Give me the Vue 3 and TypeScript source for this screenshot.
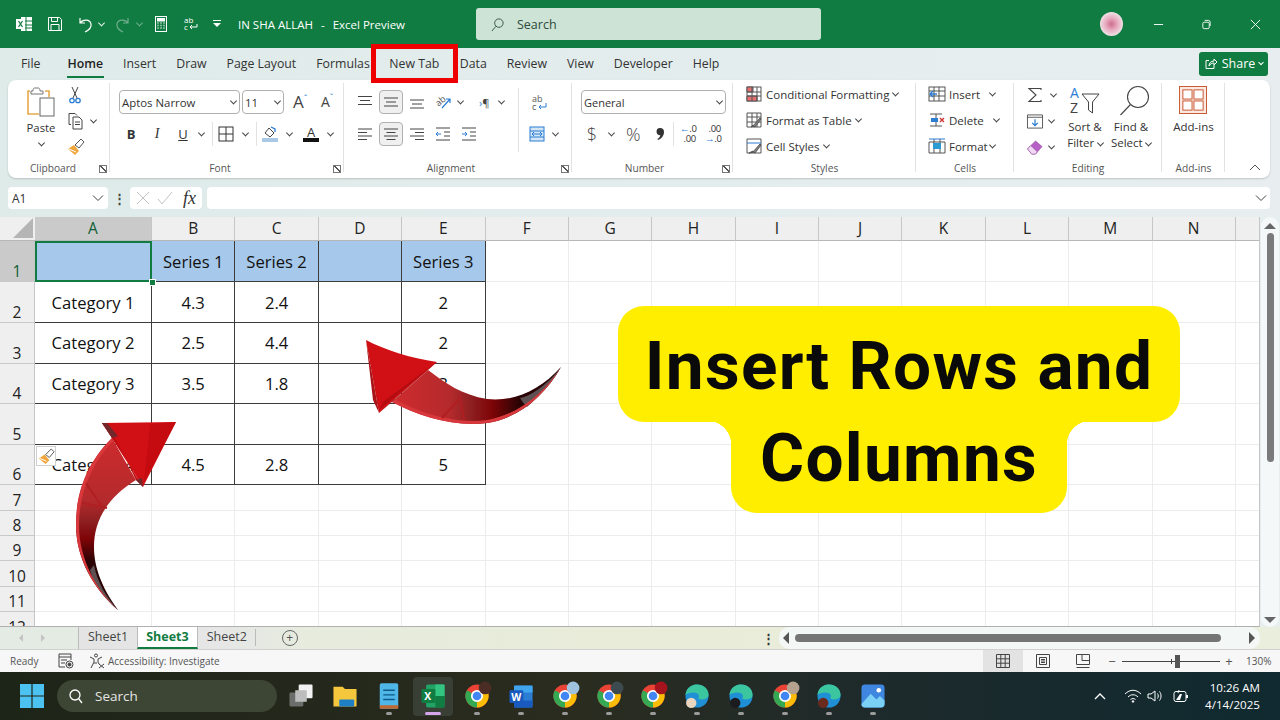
<template>
  <div class="app">
    <header class="titlebar">
      <div class="qat">
        <svg class="ic xl" viewBox="0 0 18 18"><rect x="6" y="2" width="11" height="14" fill="#fff"/><path d="M6 6h11M6 10h11M6 13h11M11 2v14" stroke="#107c41"/><rect x="1" y="4" width="9" height="10" fill="#fff"/><path d="M3.500 6l4 6M7.500 6l-4 6" stroke="#107c41" stroke-width="1.300"/></svg>
        <svg class="ic save" viewBox="0 0 18 18" fill="none" stroke="#fff"><path d="M2.500 2.500h11l2 2v11h-13z"/><path d="M5.500 2.500v4h6v-4M5 15.500v-6h8v6"/></svg>
        <svg class="ic undo" viewBox="0 0 18 18" fill="none" stroke="#fff" stroke-width="1.200"><path d="M3 3v5h5M3 8c3-4 10-4 11 1 .6 3-2 6-6 8"/></svg>
        <span class="caret light"></span>
        <svg class="ic redo" viewBox="0 0 18 18" fill="none" stroke="#6fae8d" stroke-width="1.200"><path d="M15 3v5h-5M15 8c-3-4-10-4-11 1-.6 3 2 6 6 8"/></svg>
        <span class="caret dim"></span>
        <svg class="ic calc" viewBox="0 0 18 18" fill="none" stroke="#fff"><rect x="3.500" y="1.500" width="11" height="15"/><rect x="5.500" y="3.500" width="7" height="2.500" fill="#fff"/><path d="M5.500 8h1m2 0h1m2 0h1M5.500 10.500h1m2 0h1m2 0h1M5.500 13h1m2 0h1m2 0h1" stroke-width="1.400"/></svg>
        <svg class="ic abc" viewBox="0 0 18 18" fill="none" stroke="#fff"><path d="M15 9v3H8m2-2l-2 2 2 2"/><text x="2" y="8" class="abc-t">ab</text><text x="2" y="15" class="abc-t">c</text></svg>
        <svg class="ic more" viewBox="0 0 10 10" fill="#fff"><rect x="1" y="1" width="8" height="1"/><path d="M1 4h8l-4 4z"/></svg>
      </div>
      <div class="doc-title"><span>IN SHA ALLAH</span><span>-</span><span>Excel Preview</span></div>
      <div class="search-box">
        <svg viewBox="0 0 16 16" fill="none" stroke="#33533f"><circle cx="9.500" cy="6.500" r="4.500"/><path d="M6.200 10L2 15"/></svg>
        <span>Search</span>
      </div>
      <div class="win-ctl">
        <div class="avatar"></div>
        <svg viewBox="0 0 12 12" stroke="#fff" class="ctl"><path d="M1 6h10"/></svg>
        <svg viewBox="0 0 12 12" stroke="#fff" fill="none" class="ctl"><rect x="2" y="3.500" width="7" height="7" rx="1.500"/><path d="M4 1.500h4a2 2 0 0 1 2 2v4"/></svg>
        <svg viewBox="0 0 12 12" stroke="#fff" class="ctl"><path d="M1 1l10 10M11 1L1 11"/></svg>
      </div>
    </header>

    <div class="chrome">
      <nav class="tabs">
        <span v-for="t in tabs" :key="t.name" class="tab" :class="{ active: t.active, marked: t.marked }">{{ t.name }}</span>
        <button class="share">
          <svg viewBox="0 0 14 14" fill="none" stroke="#fff"><path d="M10 7.500v4H2v-8h3M5 9c0-3 2-5 5-5V2l3 3-3 3V6C8 6 6 7 5 9z"/></svg>
          Share <span class="caret white"></span>
        </button>
      </nav>

      <section class="ribbon">
        <div class="grp clipboard">
          <div class="grp-body clip-body">
            <div class="paste">
              <svg viewBox="0 0 32 32" width="32" height="32" fill="none"><path d="M5 5H3v23h11M20 5h4v6" stroke="#e8a94c" stroke-width="1.600"/><path d="M8 5c0-3 1-3 2-3h3c1 0 2 0 2 3h3v3H6V5z" stroke="#777" fill="#fff"/><rect x="15" y="12" width="14" height="18" fill="#fff" stroke="#666"/></svg>
              <span class="lbl">Paste</span>
              <span class="caret"></span>
            </div>
            <div class="clip-col">
              <svg class="scissors" viewBox="0 0 14 18" width="14" height="18" fill="none"><path d="M4 1l5 11M10 1L5 12" stroke="#444"/><circle cx="4" cy="14.500" r="2.200" stroke="#2b7cd3" stroke-width="1.300"/><circle cx="10" cy="14.500" r="2.200" stroke="#2b7cd3" stroke-width="1.300"/></svg>
              <div class="with-caret">
                <svg viewBox="0 0 18 18" width="18" height="18" fill="none" stroke="#444"><path d="M4 12.500H2V1.500h6l2 2"/><path d="M6 5h6l3 3v9H6z"/><path d="M8 10h5M8 12.500h5"/></svg>
                <span class="caret"></span>
              </div>
              <svg viewBox="0 0 18 18" width="18" height="18"><path d="M1 11l6-4 5 6-4 4z" fill="#f0a63a"/><path d="M2 11l7 3" stroke="#fff"/><path d="M8 7l6-6 3 3-5 6z" fill="#fff" stroke="#555"/></svg>
            </div>
          </div>
          <div class="grp-name">Clipboard<i class="launch"></i></div>
        </div>

        <div class="grp font">
          <div class="grp-body stack">
            <div class="row font-row1">
              <div class="combo font-name">Aptos Narrow<span class="caret"></span></div>
              <div class="combo font-size">11<span class="caret"></span></div>
              <span class="big-a">A<sup>ˆ</sup></span>
              <span class="small-a">A<sup>ˇ</sup></span>
            </div>
            <div class="row font-row2">
              <b class="fb">B</b><i class="fi">I</i><u class="fu">U</u><span class="caret"></span>
              <span class="vsep"></span>
              <svg viewBox="0 0 16 16" width="16" height="16" fill="none" stroke="#333"><rect x="1" y="1" width="14" height="14"/><path d="M8 1v14M1 8h14"/></svg>
              <span class="caret"></span>
              <span class="vsep"></span>
              <span class="swatch-ic fill">
                <svg viewBox="0 0 16 12" width="16" height="12" fill="none"><path d="M3 7l4-5 5 5-4 4z" stroke="#444"/><path d="M9 1l4 2v3" stroke="#2b7cd3" stroke-width="1.300"/></svg>
              </span>
              <span class="caret"></span>
              <span class="swatch-ic color">A</span>
              <span class="caret"></span>
            </div>
          </div>
          <div class="grp-name">Font<i class="launch"></i></div>
        </div>

        <div class="grp align">
          <div class="grp-body align-body">
            <div class="stack align-main">
              <div class="row a-row1">
                <svg class="lines" viewBox="0 0 16 16"><path d="M1 2.500h14M3 6.500h10M1 10.500h14"/></svg>
                <span class="sel"><svg class="lines" viewBox="0 0 16 16"><path d="M1 4h14M3 8h10M1 12h14"/></svg></span>
                <svg class="lines" viewBox="0 0 16 16"><path d="M1 6h14M3 10h10M1 14h14"/></svg>
                <svg class="orient" viewBox="0 0 18 16" fill="none"><text x="1" y="10" class="rot" transform="rotate(-40 6 8)">ab</text><path d="M7 14L15 5m-4 0h4v4" stroke="#2b7cd3" stroke-width="1.200"/></svg>
                <span class="caret c-orient"></span>
                <span class="rtl"><em>›</em>¶</span>
                <span class="caret c-rtl"></span>
              </div>
              <div class="row a-row2">
                <svg class="lines" viewBox="0 0 16 16"><path d="M1 3h14M1 6.500h9M1 10h14M1 13.500h9"/></svg>
                <span class="sel"><svg class="lines" viewBox="0 0 16 16"><path d="M1 3h14M3.500 6.500h9M1 10h14M3.500 13.500h9"/></svg></span>
                <svg class="lines" viewBox="0 0 16 16"><path d="M1 3h14M6 6.500h9M1 10h14M6 13.500h9"/></svg>
                <svg class="lines indent" viewBox="0 0 16 16"><path d="M1 2h14M9 6h6M9 10h6M1 14h14"/><path d="M1 8h5M3 6L1 8l2 2" stroke="#2b7cd3"/></svg>
                <svg class="lines indent" viewBox="0 0 16 16"><path d="M1 2h14M9 6h6M9 10h6M1 14h14"/><path d="M1 8h5M4 6l2 2-2 2" stroke="#2b7cd3"/></svg>
              </div>
            </div>
            <div class="stack wrap-col">
              <svg class="wrap-ic" viewBox="0 0 16 18" width="16" height="18" fill="none"><text x="1" y="7" class="abc-d">ab</text><text x="1" y="15" class="abc-d">c</text><path d="M15 8v4H8m2-2l-2 2 2 2" stroke="#2b7cd3"/></svg>
              <div class="with-caret merge">
                <svg viewBox="0 0 16 16" width="16" height="16" fill="#d5e6f6" stroke="#2b7cd3"><rect x="1" y="1" width="14" height="14"/><path d="M1 5h14M1 11h14M3 8h10M5 6L3 8l2 2M11 6l2 2-2 2" fill="none"/></svg>
                <span class="caret"></span>
              </div>
            </div>
          </div>
          <div class="grp-name">Alignment<i class="launch"></i></div>
        </div>

        <div class="grp number">
          <div class="grp-body stack">
            <div class="combo general">General<span class="caret"></span></div>
            <div class="row num-row">
              <span class="sym dollar">$</span><span class="caret"></span>
              <span class="sym pct">%</span>
              <svg class="comma" viewBox="0 0 10 14" width="10" height="14"><path d="M5 1a4 4 0 0 1 4 4c0 4-3 7-6 8l-.6-1c1.600-1 2.800-2.300 3-3.700A3.600 3.600 0 1 1 5 1z" fill="#333"/></svg>
              <span class="vsep"></span>
              <span class="dec first"><em>←</em>.0<br>.00</span>
              <span class="dec">.00<br><em>→</em>.0</span>
            </div>
          </div>
          <div class="grp-name">Number<i class="launch"></i></div>
        </div>

        <div class="grp styles">
          <div class="grp-body list">
            <div class="li">
              <svg viewBox="0 0 16 16" width="16" height="16" fill="none" stroke="#555"><rect x="1" y="1" width="14" height="14" fill="#fff"/><path d="M1 1h6v5H1zM1 10h10v5H1z" fill="#e76f6f"/><path d="M1 6h14M1 10h14M6 1v14M11 1v14"/></svg>
              Conditional Formatting<span class="caret"></span>
            </div>
            <div class="li">
              <svg viewBox="0 0 16 16" width="16" height="16" fill="none" stroke="#555"><path d="M1 1h14v14H1z"/><path d="M1 5h14M1 10h14M6 1v14M11 1v14"/><path d="M7 14l7-8 1 1-6 8z" fill="#888"/><path d="M5 15l2-2 1 1z" fill="#2b7cd3"/></svg>
              Format as Table<span class="caret"></span>
            </div>
            <div class="li">
              <svg viewBox="0 0 16 16" width="16" height="16" fill="none" stroke="#555"><path d="M1 1h14v14H1z"/><path d="M1 5h14" stroke="#2b7cd3"/><path d="M7 14l7-8 1 1-6 8z" fill="#888"/><path d="M3 15l4-2 1 1z" fill="#2b7cd3"/></svg>
              Cell Styles<span class="caret"></span>
            </div>
          </div>
          <div class="grp-name">Styles</div>
        </div>

        <div class="grp cells">
          <div class="grp-body list">
            <div class="li">
              <svg viewBox="0 0 18 16" width="18" height="16" fill="none" stroke="#555"><rect x="1" y="1" width="16" height="14"/><path d="M1 5h16M1 10h16M6 1v14M11 1v14"/><path d="M9 8H2m3-3L2 8l3 3" stroke="#2b7cd3" stroke-width="1.400"/></svg>
              <span class="li-t">Insert</span><span class="caret"></span>
            </div>
            <div class="li">
              <svg viewBox="0 0 18 16" width="18" height="16" fill="none" stroke="#555"><path d="M2 2h12M2 14h12M8 2v12"/><rect x="3" y="6" width="7" height="4" fill="#2b7cd3" stroke="none"/><path d="M12 6l4 4m0-4l-4 4" stroke="#d13438" stroke-width="1.400"/></svg>
              <span class="li-t wide">Delete</span><span class="caret"></span>
            </div>
            <div class="li">
              <svg viewBox="0 0 18 16" width="18" height="16" fill="none" stroke="#555"><path d="M1 4h16v11H1zM6 1v14M12 1v14"/><rect x="5" y="5" width="8" height="6" fill="#2b9bd3" stroke="none"/><path d="M1 1h16" stroke="#2b7cd3"/></svg>
              <span class="li-t">Format</span><span class="caret"></span>
            </div>
          </div>
          <div class="grp-name">Cells</div>
        </div>

        <div class="grp editing">
          <div class="grp-body edit-body">
            <div class="edit-col">
              <div class="with-caret first">
                <svg viewBox="0 0 16 16" width="16" height="16" fill="none" stroke="#444" stroke-width="1.100"><path d="M14 3V1.500H2L9 8l-7 6.500h12V13"/></svg>
                <span class="caret"></span>
              </div>
              <div class="with-caret">
                <svg viewBox="0 0 17 15" width="16" height="15" fill="none"><path d="M.5.500h16v14H.5z" stroke="#555"/><path d="M.5 3h16" stroke="#555"/><path d="M8.500 5v7m-3-3l3 3 3-3" stroke="#2b7cd3" stroke-width="1.300"/></svg>
                <span class="caret"></span>
              </div>
              <div class="with-caret">
                <svg viewBox="0 0 17 15" width="16" height="15"><path d="M.5 9L9 .5l7 6L9 14.500H5z" fill="#b760c6" stroke="#8e4a9a" stroke-width=".6"/><path d="M4 5.500l7 6.500L9 14.500H5L.5 9z" fill="#f1d8f5" stroke="#8e4a9a" stroke-width=".6"/></svg>
                <span class="caret"></span>
              </div>
            </div>
            <div class="big-btn sort">
              <svg viewBox="0 0 30 28" width="30" height="28" fill="none"><text x="0" y="12" class="az blue">A</text><text x="0" y="27" class="az">Z</text><path d="M12 8h17l-6.500 8v11l-4-3v-8z" stroke="#444"/></svg>
              <span>Sort &amp;</span>
              <span>Filter<em class="caret"></em></span>
            </div>
            <div class="big-btn find">
              <svg viewBox="0 0 30 30" width="30" height="30" fill="none" stroke="#444" stroke-width="1.100"><circle cx="18" cy="11" r="10.500"/><path d="M10.500 18.500L.5 29"/></svg>
              <span>Find &amp;</span>
              <span>Select<em class="caret"></em></span>
            </div>
          </div>
          <div class="grp-name">Editing</div>
        </div>

        <div class="grp addins">
          <div class="grp-body">
            <div class="big-btn">
              <svg viewBox="0 0 29 29" width="28" height="28" fill="#fbe9e2" stroke="#c8562f"><rect x=".5" y=".5" width="28" height="28"/><rect x="4" y="4" width="9.500" height="9.500" fill="#fff"/><rect x="15.500" y="4" width="9.500" height="9.500" fill="#fff"/><rect x="4" y="15.500" width="9.500" height="9.500" fill="#fff"/><rect x="15.500" y="15.500" width="9.500" height="9.500" fill="#fff"/></svg>
              <span class="addin-l">Add-ins</span>
            </div>
          </div>
          <div class="grp-name">Add-ins</div>
        </div>

        <div class="collapse">
          <svg viewBox="0 0 12 8" width="12" height="8" fill="none" stroke="#555"><path d="M1 7l5-5 5 5"/></svg>
        </div>
      </section>

      <div class="formula-bar">
        <div class="name-box">A1<svg viewBox="0 0 12 8" width="12" height="8" fill="none" stroke="#444"><path d="M1 1.500l5 5 5-5"/></svg></div>
        <span class="grip">⋮</span>
        <div class="fx-box">
          <svg viewBox="0 0 14 14" width="14" height="14" stroke="#c4c4c4" fill="none"><path d="M1 1l12 12M13 1L1 13"/></svg>
          <svg viewBox="0 0 16 14" width="16" height="14" stroke="#c4c4c4" fill="none"><path d="M1 8l4 5L15 1"/></svg>
          <i class="fx">fx</i>
        </div>
        <div class="formula-input"><svg viewBox="0 0 12 8" width="12" height="8" fill="none" stroke="#444"><path d="M1 1.500l5 5 5-5"/></svg></div>
      </div>
    </div>

    <main class="sheet">
      <div class="grid-wrap">
        <div class="grid">
          <div class="corner"><span class="tri"></span></div>
          <div v-for="c in columns" :key="c" class="col-h" :class="{ on: c === 'A' }">{{ c }}</div>
          <template v-for="(r, ri) in rows" :key="ri">
            <div class="row-h" :class="{ on: ri === 0 }" :style="{ height: r.h + 'px' }"><span>{{ ri + 1 }}</span></div>
            <div
              v-for="(c, ci) in columns"
              :key="c"
              class="cell"
              :class="cellClass(ri, ci)"
            >{{ ri < table.length ? table[ri][ci] : '' }}</div>
          </template>
        </div>

        <span class="paste-tag">
          <svg viewBox="0 0 18 18" width="17" height="17"><path d="M1 11l6-4 5 6-4 4z" fill="#f0a63a"/><path d="M2 11l7 3" stroke="#fff"/><path d="M8 7l6-6 3 3-5 6z" fill="#fff" stroke="#555"/></svg>
        </span>
        <span class="fill-handle"></span>

        <!-- the two red arrows drawn over the grid, paths are in page coordinates -->
        <svg class="arrow arrow-up" viewBox="70 418 110 196">
          <defs>
            <linearGradient id="shaft" gradientUnits="userSpaceOnUse" x1="0" y1="440" x2="0" y2="600">
              <stop offset="0" stop-color="#cc2b2e"/>
              <stop offset=".38" stop-color="#b42a2c"/>
              <stop offset=".5" stop-color="#8f2022"/>
              <stop offset=".62" stop-color="#7d0407"/>
              <stop offset=".76" stop-color="#2a0304"/>
              <stop offset="1" stop-color="#2a0304"/>
            </linearGradient>
          </defs>
          <path d="M112 438C85 465 76 495 76 525 76 560 95 590 118 610 100 585 94 565 94 547 94 520 108 497 136 480z" fill="url(#shaft)"/>
          <path d="M94 565C97 582 107 598 118 610 105 598 95 588 90 570z" fill="#5d5153"/>
          <path d="M112 438C85 465 76 495 76 525 76 560 95 590 118 610 97 590 79 560 79 525 79 495 90 465 114 440z" fill="#d8383b"/>
          <path d="M86 483L102 507M82 503L107 508" stroke="#b01f22" stroke-width="2" fill="none"/>
          <path d="M102 423L176 422 143 487 112 438z" fill="#d01015"/>
          <path d="M102 423L108 423 136 480 143 487 112 438z" fill="#c00d12"/>
          <path d="M102 423L107 423 118 436 112 438z" fill="#70282b"/>
          <path d="M136 480L143 487 142 478z" fill="#70282b"/>
          <path d="M150 424L176 422 144 482z" fill="#c50b10"/>
        </svg>
        <svg class="arrow arrow-left" viewBox="360 335 206 95">
          <defs>
            <linearGradient id="shaft2" gradientUnits="userSpaceOnUse" x1="400" y1="0" x2="540" y2="0">
              <stop offset="0" stop-color="#cc2b2e"/>
              <stop offset=".36" stop-color="#b42a2c"/>
              <stop offset=".5" stop-color="#8f2022"/>
              <stop offset=".66" stop-color="#7d0407"/>
              <stop offset=".85" stop-color="#2a0304"/>
            </linearGradient>
          </defs>
          <path d="M428 370C445 383 462 395 487 399 515 402 540 390 561 367 545 395 520 418 487 423 455 427 420 417 392 402z" fill="url(#shaft2)"/>
          <path d="M520 398C532 396 550 382 561 367 553 382 540 395 527 407 524 404 522 401 520 398z" fill="#5d5153"/>
          <path d="M392 402C420 417 455 427 487 423 520 418 545 395 561 367 545 392 520 414 487 420 455 424 422 414 394 399z" fill="#d8383b"/>
          <path d="M442 418L460 398 464 420" stroke="#b01f22" stroke-width="2" fill="none"/>
          <path d="M366 340C385 350 410 358 437 362L379 413z" fill="#d01015"/>
          <path d="M379 413L437 362 428 370 392 402z" fill="#70282b"/>
          <path d="M384 401L437 362 379 410z" fill="#b40c11"/>
          <path d="M366 340L379 413 373 400z" fill="#a81418"/>
        </svg>

        <!-- headline sticker -->
        <div class="callout">
          <div class="callout-top">Insert Rows and</div>
          <div class="callout-bottom">Columns</div>
        </div>
      </div>

      <aside class="vscroll">
        <span class="tri-up"></span>
        <span class="thumb"></span>
        <span class="tri-down"></span>
      </aside>
    </main>

    <div class="sheetbar">
      <div class="sheet-nav"><span class="nav-l"></span><span class="nav-r"></span></div>
      <div class="sheet-tabs">
        <span class="stab">Sheet1</span>
        <span class="stab current">Sheet3</span>
        <span class="stab last">Sheet2</span>
        <span class="plus">+</span>
      </div>
      <div class="hscroll-wrap">
        <span class="grip dark">⋮</span>
        <div class="hscroll">
          <span class="h-l"></span>
          <span class="h-thumb"></span>
          <span class="h-r"></span>
        </div>
      </div>
    </div>

    <footer class="statusbar">
      <span class="ready">Ready</span>
      <svg class="st-macro" viewBox="0 0 16 16" width="16" height="16" fill="none" stroke="#444"><path d="M1 1h12v6M1 1v13h6M1 4h12M3 7h6M3 10h4"/><circle cx="11.500" cy="11.500" r="3.500"/><circle cx="11.500" cy="11.500" r="1.500" fill="#444"/></svg>
      <svg class="st-acc" viewBox="0 0 16 16" width="16" height="16" fill="none" stroke="#444"><circle cx="7" cy="2.500" r="1.500"/><path d="M1 4l4 2v3l-3 6M13 4L9 6v3l1 2M5 10h3M10 11l5 4m0-4l-5 4"/></svg>
      <span class="acc">Accessibility: Investigate</span>
      <div class="st-right">
        <span class="view on"><svg viewBox="0 0 14 14" width="14" height="14" fill="none" stroke="#444"><path d="M.5.500h13v13H.5zM.5 4.800h13M.5 9.200h13M4.800.5v13M9.200.5v13"/></svg></span>
        <span class="view"><svg viewBox="0 0 14 14" width="14" height="14" fill="none" stroke="#444"><path d="M.5.500h13v13H.5z"/><path d="M3.500 3.500h7v7h-7zM5 5.500h4M5 7h4M5 8.500h4"/></svg></span>
        <span class="view"><svg viewBox="0 0 14 14" width="14" height="14" fill="none" stroke="#444"><path d="M.5.500h13v10H.5zM.5 13.500h13M6 .5v6h7.500"/></svg></span>
        <span class="zm minus">−</span>
        <span class="slider"><i class="tick"></i><i class="knob"></i></span>
        <span class="zm plus-z">+</span>
        <span class="pct-l">130%</span>
      </div>
    </footer>

    <footer class="taskbar">
      <svg class="start" viewBox="0 0 20 20" width="24" height="24"><path d="M0 0h9.500v9.500H0zM10.500 0H20v9.500h-9.500zM0 10.500h9.500V20H0zM10.500 10.500H20V20h-9.500z" fill="#4cc2f1"/></svg>
      <div class="tb-search">
        <svg viewBox="0 0 16 16" width="16" height="16" fill="none" stroke="#fff" stroke-width="1.300"><circle cx="7" cy="7" r="5"/><path d="M10.500 10.500L14 15"/></svg>
        <span>Search</span>
      </div>
      <div class="tb-apps">
        <span class="app-ic" v-for="(a, i) in apps" :key="i" :class="{ current: a === 'excel' }">
          <svg viewBox="0 0 26 26" width="30" height="30">
            <template v-if="a === 'view'">
              <rect x="11" y="3" width="12" height="12" rx="1" fill="#f2f2f2"/>
              <rect x="3" y="10" width="12" height="12" rx="1" fill="#6b6f6b"/>
              <rect x="8" y="8" width="10" height="10" fill="#bdbdbd"/>
            </template>
            <template v-else-if="a === 'files'">
              <path d="M3 5h8l2 2h10v15H3z" fill="#f5c73d"/>
              <rect x="8" y="16" width="13" height="6" rx="1" fill="#1f7fc4"/>
            </template>
            <template v-else-if="a === 'notes'">
              <rect x="5" y="2" width="16" height="22" rx="1.500" fill="#4fb6e8"/>
              <rect x="5" y="21" width="16" height="3" fill="#c06a33"/>
              <path d="M8 8h10M8 12h10M8 16h10" stroke="#0d5a86" stroke-width="1.200"/>
            </template>
            <template v-else-if="a === 'excel'">
              <rect x="7" y="3" width="16" height="20" rx="1.500" fill="#21a366"/>
              <rect x="15" y="3" width="8" height="10" fill="#33c481"/>
              <rect x="15" y="13" width="8" height="10" fill="#107c41"/>
              <rect x="3" y="7" width="12" height="12" rx="1" fill="#107c41"/>
              <text x="5.500" y="16.500" class="tb-l">X</text>
            </template>
            <template v-else-if="a === 'word'">
              <rect x="7" y="4" width="16" height="19" rx="1.500" fill="#2b7cd3"/>
              <rect x="7" y="4" width="16" height="6" fill="#41a5ee"/>
              <rect x="7" y="17" width="16" height="6" fill="#185abd"/>
              <rect x="3" y="8" width="12" height="11" rx="1" fill="#185abd"/>
              <text x="4.500" y="17" class="tb-l">W</text>
            </template>
            <template v-else-if="a === 'photos'">
              <rect x="3" y="3" width="20" height="20" rx="3" fill="#3f86e0"/>
              <path d="M3 20l8-9 5 5 3-3 4 4v3a3 3 0 0 1-3 3H6a3 3 0 0 1-3-3z" fill="#7ad1f5"/>
              <circle cx="18" cy="8" r="2" fill="#fff"/>
            </template>
            <template v-else-if="a.startsWith('edge')">
              <circle cx="13" cy="13" r="10" fill="#1f8fd6"/>
              <path d="M3 12C4 5 9 3 13 3c6 0 10 4 10 9 0 3-3 4-6 4-2 0-3-1-3-1 2-2 0-5-4-5-3 0-6 1-7 2z" fill="#3cc6a0"/>
              <circle cx="8" cy="19" r="4.500" :fill="a === 'edge2' ? '#1c1c20' : a === 'edge3' ? '#6b2a1e' : '#e8d6c0'"/>
            </template>
            <template v-else>
              <circle cx="13" cy="13" r="10" fill="#ea4335"/>
              <path d="M13 13L21.700 8a10 10 0 0 1-8.700 15z" fill="#fbbc05"/>
              <path d="M13 13L4.300 8A10 10 0 0 0 13 23z" fill="#34a853"/>
              <circle cx="13" cy="13" r="4.500" fill="#4285f4" stroke="#fff" stroke-width="1.500"/>
              <circle cx="20" cy="6" r="5.500" :fill="badges[a]"/>
            </template>
          </svg>
          <i class="dot"></i>
        </span>
      </div>
      <div class="tray">
        <svg viewBox="0 0 12 8" width="12" height="8" fill="none" stroke="#fff" stroke-width="1.300"><path d="M1 7l5-5 5 5"/></svg>
        <svg class="t-wifi" viewBox="0 0 18 14" width="18" height="14" fill="none" stroke="#fff"><path d="M1 5c5-5 11-5 16 0M4 8c3-3 7-3 10 0M6.500 10.500c1.500-1.200 3.500-1.200 5 0"/><circle cx="9" cy="12.500" r=".8" fill="#fff"/></svg>
        <svg class="t-vol" viewBox="0 0 16 14" width="16" height="14" fill="none" stroke="#fff"><path d="M1 5h3l4-3v10L4 9H1zM10.500 4.500c1 1.500 1 3.500 0 5M12.500 2.500c2 2.500 2 6.500 0 9"/></svg>
        <svg class="t-bat" viewBox="0 0 18 14" width="18" height="14" fill="none" stroke="#fff"><rect x="2" y="2.500" width="12" height="10" rx="2"/><path d="M15 6v3" stroke-width="2"/><path d="M4 11l4-6h2L8 11z" fill="#fff" stroke="none"/><path d="M6 4l1-3" /></svg>
        <div class="clock"><span>10:26 AM</span><span>4/14/2025</span></div>
      </div>
    </footer>
  </div>
</template>

<script setup lang="ts">
type Tab = { name: string; active?: boolean; marked?: boolean };

const tabs: Tab[] = [
  { name: 'File' },
  { name: 'Home', active: true },
  { name: 'Insert' },
  { name: 'Draw' },
  { name: 'Page Layout' },
  { name: 'Formulas' },
  { name: 'New Tab', marked: true },
  { name: 'Data' },
  { name: 'Review' },
  { name: 'View' },
  { name: 'Developer' },
  { name: 'Help' },
];

const columns = ['A', 'B', 'C', 'D', 'E', 'F', 'G', 'H', 'I', 'J', 'K', 'L', 'M', 'N', ''];

const rows = [41, 41, 40.5, 40.5, 41, 40, 26, 25, 25, 26, 25, 26].map((h) => ({ h }));

const table: string[][] = [
  ['', 'Series 1', 'Series 2', '', 'Series 3'],
  ['Category 1', '4.3', '2.4', '', '2'],
  ['Category 2', '2.5', '4.4', '', '2'],
  ['Category 3', '3.5', '1.8', '', '3'],
  ['', '', '', '', ''],
  ['Category 4', '4.5', '2.8', '', '5'],
];

const apps = ['view', 'files', 'notes', 'excel', 'chrome1', 'word', 'chrome2', 'chrome3', 'chrome4', 'edge1', 'edge2', 'chrome5', 'edge3', 'photos'];

const badges: Record<string, string> = {
  chrome1: '#4b2d25',
  chrome2: '#9fc3de',
  chrome3: '#3d4a50',
  chrome4: '#a5141d',
  chrome5: '#b4a28e',
};

function cellClass(r: number, c: number) {
  const inTable = r < table.length && c < 5;
  return {
    boxed: inTable,
    head: r === 0 && c < 5,
    first: r === 0 && c === 0,
    last: c === columns.length - 1,
  };
}
</script>

<style>
html, body {
  margin: 0;
  height: 100%;
  overflow: hidden;
}
</style>

<style scoped>
.app {
  width: 1280px;
  height: 720px;
  display: flex;
  flex-direction: column;
  font-family: "Open Sans", "Noto Sans", sans-serif;
  font-size: 12.3px;
  color: #333;
  overflow: hidden;
  background: #e6eeee;
}

svg { display: block; flex: none; overflow: visible; }

.caret {
  display: inline-block;
  flex: none;
  width: 4px;
  height: 4px;
  border-right: 1px solid #444;
  border-bottom: 1px solid #444;
  transform: translateY(-1.5px) rotate(45deg);
}

/* title bar */
.titlebar {
  height: 48px;
  flex: none;
  background: #107c41;
  color: #fff;
  display: flex;
  align-items: center;
  position: relative;
}
.qat {
  display: flex;
  align-items: center;
  width: 238px;
  padding-left: 15px;
  box-sizing: border-box;
}
.ic { width: 18px; height: 18px; }
.save { margin-left: 13px; }
.undo { margin-left: 13px; }
.caret.light { border-color: #e8f3ec; margin-left: 3.5px; }
.redo { margin-left: 9.5px; }
.caret.dim { border-color: #6fae8d; margin-left: 5.5px; }
.calc { margin-left: 10.5px; }
.abc { margin-left: 12px; }
.abc-t { font-size: 8px; fill: #fff; stroke: none; }
.more { width: 10px; height: 10px; margin-left: 12px; }
.doc-title {
  display: flex;
  gap: 8px;
  width: 238px;
  font-size: 11.5px;
  white-space: nowrap;
}
.search-box {
  width: 345px;
  height: 32px;
  background: #cde3d6;
  border-radius: 3px;
  display: flex;
  align-items: center;
  gap: 12px;
  padding-left: 14px;
  box-sizing: border-box;
  color: #2e4a3a;
  font-size: 12.5px;
}
.search-box svg { width: 15px; height: 15px; }
.win-ctl {
  margin-left: auto;
  display: flex;
  align-items: center;
  width: 180px;
  height: 48px;
}
.avatar {
  width: 23px;
  height: 24px;
  border-radius: 50%;
  background: radial-gradient(circle at 50% 50%, #cf6d8f 0, #e6a9be 35%, #f1e7ea 75%);
  margin-right: 30px;
}
.ctl { width: 11px; height: 11px; margin-right: 37px; }
.ctl:nth-child(3) { margin-right: 38px; }
.ctl:last-child { margin-right: 0; }

/* tabs + ribbon */
.chrome {
  flex: none;
  height: 169px;
  padding: 0 10px 0 8px;
  box-sizing: border-box;
  background: linear-gradient(90deg, #deebe9, #e8eef0);
}
.tabs {
  height: 32px;
  display: flex;
  align-items: center;
  position: relative;
}
.tab {
  position: relative;
  padding: 0 7.5px;
  white-space: nowrap;
  margin-right: 5px;
  line-height: 32px;
}
.tab:first-child { padding-left: 13px; margin-right: 12px; }
.tab.active {
  font-weight: 600;
  color: #1f1f1f;
}
.tab.active::after {
  content: "";
  position: absolute;
  left: 7px;
  right: 7px;
  bottom: 2px;
  height: 2px;
  background: #107c41;
}
.tab.marked { padding: 0 18.5px; margin: 0 -5.5px 0 -11.5px; }
.tab.marked::before {
  content: "";
  position: absolute;
  inset: -4px 0 -3px;
  border: 5px solid #ee0000;
}
.share {
  margin-left: auto;
  margin-right: 2px;
  margin-top: -1px;
  height: 24px;
  width: 69px;
  padding: 0;
  border: 0;
  border-radius: 3px;
  background: #107c41;
  color: #fff;
  font: inherit;
  font-size: 12.5px;
  display: flex;
  align-items: center;
  justify-content: center;
  gap: 4px;
}
.share svg { width: 14px; height: 14px; }
.caret.white { border-color: #fff; width: 3px; height: 3px; }

.ribbon {
  height: 98px;
  background: #fff;
  border-radius: 8px;
  box-shadow: 0 1px 2px rgba(0, 0, 0, .18);
  display: flex;
}
.grp {
  position: relative;
  display: flex;
  flex-direction: column;
  flex: none;
  box-sizing: border-box;
  padding-top: 6px;
}
.grp::after {
  content: "";
  position: absolute;
  right: 0;
  top: 3px;
  bottom: 6px;
  width: 1px;
  background: #e2e2e2;
}
.grp-body { height: 70px; flex: none; display: flex; box-sizing: border-box; }
.grp-name {
  position: relative;
  height: 22px;
  line-height: 24px;
  text-align: center;
  font-size: 10.2px;
  color: #555;
}
.clipboard .grp-name { padding-right: 12px; }
.font .grp-name, .align .grp-name { padding-right: 14px; }
.number .grp-name { padding-right: 16px; }
.launch {
  position: absolute;
  right: 3px;
  top: 9px;
  width: 6px;
  height: 6px;
  border: 1px solid #777;
  background: linear-gradient(45deg, transparent 45%, #555 45%, #555 60%, transparent 60%);
}
.clipboard { width: 102px; }
.font { width: 234px; }
.align { width: 228px; }
.number { width: 161px; }
.styles { width: 183px; }
.cells { width: 98px; }
.editing { width: 148px; }
.addins { width: 63px; }
.clip-body { padding-left: 17px; gap: 10px; }
.paste {
  display: flex;
  flex-direction: column;
  align-items: center;
  width: 32px;
}
.lbl { font-size: 11.3px; margin-top: 2px; line-height: 16px; }
.paste .caret { margin-top: 6px; }
.clip-col {
  display: flex;
  flex-direction: column;
  align-items: flex-start;
  gap: 8px;
}
.scissors { margin-left: 1px; }
.with-caret { display: flex; align-items: center; gap: 6px; }
.stack { display: flex; flex-direction: column; }
.row { display: flex; align-items: center; }
.combo {
  box-sizing: border-box;
  height: 24px;
  flex: none;
  border: 1px solid #b0b0b0;
  border-radius: 4px;
  display: flex;
  align-items: center;
  justify-content: space-between;
  padding: 0 3px 0 2px;
  font-size: 11.4px;
  white-space: nowrap;
  background: #fff;
}
.font-row1 { padding: 4px 0 0 9px; gap: 2px; }
.font-name { width: 121px; }
.font-size { width: 42px; }
.big-a { font-size: 17px; margin-left: 7px; color: #444; width: 22px; white-space: nowrap; line-height: 20px; }
.small-a { font-size: 14px; margin-left: 4px; color: #444; white-space: nowrap; line-height: 20px; }
sup { color: #2b7cd3; font-size: 9px; vertical-align: 6px; line-height: 0; }
.font-row2 { padding: 8px 0 0 14px; height: 24px; }
.fb { width: 14px; font-size: 13px; text-align: center; }
.fi { font-family: "Liberation Serif", serif; width: 14px; margin-left: 12px; font-size: 14px; text-align: center; }
.fu { margin-left: 12px; font-size: 13px; width: 14px; text-align: center; }
.font-row2 .caret { margin: 0 8.5px; }
.vsep { width: 1px; height: 24px; background: #e2e2e2; margin-right: 5px; flex: none; }
.swatch-ic.fill { width: 16px; height: 12px; border-bottom: 4px solid #a9c8e6; }
.swatch-ic.color {
  width: 16px;
  margin-left: 3px;
  text-align: center;
  font-size: 13px;
  line-height: 12px;
  border-bottom: 4px solid #111;
}
.align-body { padding-left: 13px; }
.align-main { width: 161px; flex: none; }
.lines { width: 16px; height: 16px; fill: none; stroke: #444; stroke-width: 1; }
.sel {
  width: 24px;
  height: 24px;
  box-sizing: border-box;
  display: flex;
  align-items: center;
  justify-content: center;
  border: 1px solid #b0b0b0;
  border-radius: 4px;
  background: #f0f0f0;
}
.a-row1 { height: 24px; margin-top: 4px; gap: 6px; }
.a-row2 { height: 24px; margin-top: 8px; gap: 6px; }
.indent { margin-left: 4px; }
.orient { width: 18px; height: 16px; margin-left: 4px; }
.rot { font-size: 9px; fill: #555; }
.c-orient { margin-left: -1.5px; }
.rtl { font-size: 11px; margin-left: 10.5px; color: #444; }
.rtl em { color: #2b7cd3; font-style: normal; }
.c-rtl { margin-left: 3.5px; }
.wrap-col { gap: 13px; padding: 9px 0 0 11px; align-items: flex-start; position: relative; }
.wrap-ic { margin-left: 2px; }
.merge { gap: 8px; }
.wrap-col::before {
  content: "";
  position: absolute;
  left: 0;
  top: 2px;
  height: 64px;
  width: 1px;
  background: #e2e2e2;
}
.abc-d { font-size: 9px; fill: #555; }
.number .stack { padding: 4px 0 0 9px; }
.general { width: 145px; font-size: 11px; }
.num-row { height: 24px; margin-top: 8px; }
.num-row .caret { margin-left: 5.5px; }
.sym { color: #444; }
.dollar { font-size: 18px; width: 22px; text-align: center; font-weight: 300; }
.pct { font-size: 18px; margin-left: 12.5px; width: 16px; font-weight: 300; }
.comma { margin-left: 13px; }
.num-row .vsep { margin: 0 6px 0 8px; }
.dec { font-size: 9.5px; line-height: 10px; letter-spacing: -.3px; width: 16px; white-space: nowrap; text-align: right; }
.dec.first { margin-right: 9px; }
.dec em { color: #2b7cd3; font-style: normal; }
.list {
  flex-direction: column;
  gap: 4px;
  margin-top: -3px;
  margin-bottom: 3px;
}
.styles .list { padding-left: 13px; }
.cells .list { padding-left: 12px; }
.li {
  display: flex;
  flex: none;
  align-items: center;
  gap: 4px;
  height: 22px;
  font-size: 11.5px;
  white-space: nowrap;
}
.cells .li { gap: 3px; }
.li-t { width: 38px; }
.li-t.wide { width: 42px; }
.edit-body { padding-left: 13px; }
.edit-col { display: flex; flex-direction: column; gap: 8px; width: 36px; flex: none; }
.with-caret.first { gap: 7.5px; height: 18px; }
.edit-col .with-caret { height: 18px; }
.big-btn {
  display: flex;
  flex-direction: column;
  align-items: center;
  font-size: 11.5px;
  line-height: 16px;
  white-space: nowrap;
}
.big-btn em { margin-left: 3.5px; }
.sort { width: 44px; flex: none; }
.find { width: 44px; flex: none; margin-left: 2px; }
.sort svg { margin-bottom: 5px; }
.find svg { margin-bottom: 3px; margin-left: 8px; }
.az { font-size: 14px; fill: #444; }
.az.blue { fill: #2b7cd3; }
.addins .grp-body { justify-content: center; }
.addin-l { margin-top: 5px; }
.collapse {
  flex: 1;
  display: flex;
  justify-content: flex-end;
  align-items: flex-end;
  padding: 0 9px 7px 0;
}

.formula-bar {
  display: flex;
  align-items: center;
  height: 22px;
  margin-top: 9px;
}
.name-box, .fx-box, .formula-input {
  height: 22px;
  background: #fff;
  border-radius: 4px;
  display: flex;
  align-items: center;
  box-sizing: border-box;
}
.name-box {
  width: 100px;
  padding: 0 4px 0 4px;
  justify-content: space-between;
  font-size: 12px;
}
.grip { width: 22px; text-align: center; font-weight: 700; font-size: 13px; color: #444; }
.fx-box { width: 72px; padding-left: 6px; gap: 7px; }
.fx { font-family: "Liberation Serif", serif; font-size: 18px; color: #333; margin-left: 3px; }
.formula-input {
  flex: 1;
  margin-left: 5px;
  justify-content: flex-end;
  padding-right: 3px;
}

/* worksheet */
.sheet {
  flex: 1;
  min-height: 0;
  display: flex;
  overflow: hidden;
  background: #e6eeee;
}
.grid-wrap {
  position: relative;
  width: 1260px;
  height: 100%;
  overflow: hidden;
  background: #fff;
  border-bottom: 1px solid #b0b0b0;
  border-right: 1px solid #c6c6c6;
  box-sizing: border-box;
}
.grid {
  display: grid;
  grid-template-columns: 35px 117px repeat(14, 83.38px);
  color: #111;
  font-size: 16.6px;
}
.corner, .col-h {
  height: 24px;
  background: #efefef;
  box-sizing: border-box;
  border-bottom: 1px solid #b7b7b7;
}
.corner { position: relative; }
.tri {
  position: absolute;
  right: 2px;
  bottom: 2px;
  border-style: solid;
  border-width: 0 0 20px 20px;
  border-color: transparent transparent #b5b5b5 transparent;
}
.col-h {
  text-align: center;
  line-height: 23px;
  border-right: 1px solid #c6c6c6;
  font-size: 15.5px;
  color: #222;
}
.col-h.on { background: #cacaca; color: #0f5f34; }
.row-h {
  background: #efefef;
  border-right: 1px solid #c6c6c6;
  border-bottom: 1px solid #c9c9c9;
  box-sizing: border-box;
  display: flex;
  align-items: flex-end;
  justify-content: center;
  font-size: 15.5px;
  line-height: 20px;
  color: #222;
  overflow: hidden;
}
.row-h.on { background: #cacaca; color: #0f5f34; }
.cell {
  box-sizing: border-box;
  border-right: 1px solid #ececec;
  border-bottom: 1px solid #ececec;
  display: flex;
  align-items: center;
  justify-content: center;
  white-space: nowrap;
  overflow: hidden;
}
.cell.boxed {
  border-right: 1px solid #3c3c3c;
  border-bottom: 1px solid #3c3c3c;
}
.cell.head { background: #a6c8ea; }
.cell.first {
  outline: 2px solid #107c41;
  outline-offset: -2px;
  border-color: #107c41;
}
.fill-handle {
  position: absolute;
  left: 149px;
  top: 62px;
  width: 5px;
  height: 5px;
  background: #107c41;
  border: 1px solid #fff;
}
.paste-tag {
  position: absolute;
  left: 36px;
  top: 229px;
  width: 20px;
  height: 20px;
  background: #fff;
  border: 1px solid #d0d0d0;
  box-sizing: border-box;
  display: flex;
  align-items: center;
  justify-content: center;
}
.arrow { position: absolute; overflow: visible; }
.arrow-up { left: 70px; top: 201px; width: 110px; height: 196px; }
.arrow-left { left: 360px; top: 118px; width: 206px; height: 95px; }

.callout {
  position: absolute;
  left: 618px;
  top: 89px;
  width: 562px;
  display: flex;
  flex-direction: column;
  align-items: center;
  font-family: Roboto, "Open Sans", sans-serif;
  font-weight: 700;
  font-size: 67.5px;
  letter-spacing: 1.3px;
  color: #0a0a0a;
  text-align: center;
  white-space: nowrap;
}
.callout-top {
  box-sizing: border-box;
  width: 562px;
  height: 116px;
  line-height: 120px;
  background: #ffee00;
  border-radius: 26px;
}
.callout-bottom {
  position: relative;
  box-sizing: border-box;
  width: 336px;
  height: 92px;
  line-height: 74px;
  margin-top: -1px;
  background: #ffee00;
  border-radius: 0 0 26px 26px;
}
.callout-bottom::before, .callout-bottom::after {
  content: "";
  position: absolute;
  top: 0;
  width: 24px;
  height: 24px;
}
.callout-bottom::before {
  left: -24px;
  background: radial-gradient(circle at 0 100%, transparent 24px, #ffee00 24.5px);
}
.callout-bottom::after {
  right: -24px;
  background: radial-gradient(circle at 100% 100%, transparent 24px, #ffee00 24.5px);
}

.vscroll {
  width: 18px;
  margin-left: 1px;
  position: relative;
  display: flex;
  flex-direction: column;
  align-items: center;
  background: #f4f8f8;
  border-radius: 9px;
}
.tri-up, .tri-down {
  border-left: 6px solid transparent;
  border-right: 6px solid transparent;
}
.tri-up { border-bottom: 6px solid #666; margin-top: 6px; }
.tri-down { border-top: 6px solid #666; margin-top: auto; margin-bottom: 4px; }
.thumb {
  width: 7px;
  height: 229px;
  border-radius: 4px;
  background: #7a7a7a;
  margin-top: 4px;
}

.sheetbar {
  flex: none;
  height: 23px;
  display: flex;
  align-items: stretch;
  background: linear-gradient(90deg, #e3ebe4, #e9ecd8 50%, #e9eedd);
  border-bottom: 1px solid #d0d0d0;
  box-sizing: border-box;
}
.sheet-nav {
  width: 78px;
  display: flex;
  align-items: center;
  gap: 18px;
  padding-left: 19px;
  box-sizing: border-box;
}
.nav-l { border-right: 4px solid #c4c4c4; border-top: 4px solid transparent; border-bottom: 4px solid transparent; }
.nav-r { border-left: 4px solid #c4c4c4; border-top: 4px solid transparent; border-bottom: 4px solid transparent; }
.sheet-tabs {
  width: 222px;
  display: flex;
  align-items: stretch;
  margin-top: -1px;
  background: linear-gradient(90deg, #e4e4e4, #e6e6e6 60%, transparent);
  border-left: 1px solid #bbb;
  font-size: 12.5px;
  color: #444;
}
.stab {
  padding: 0 9px;
  line-height: 22px;
  white-space: nowrap;
}
.stab.current {
  font-weight: 700;
  color: #107c41;
  background: #fff;
  border-bottom: 2px solid #107c41;
  border-left: 1px solid #bbb;
  border-right: 1px solid #bbb;
  padding: 0 8px;
}
.stab.last { position: relative; }
.stab.last::after {
  content: "";
  position: absolute;
  right: 0;
  top: 3px;
  bottom: 3px;
  width: 1px;
  background: #bbb;
}
.plus {
  width: 14px;
  height: 14px;
  margin: 4px 0 0 26px;
  border: 1px solid #666;
  border-radius: 50%;
  text-align: center;
  line-height: 13px;
  font-size: 12px;
  color: #555;
}
.hscroll-wrap {
  flex: 1;
  display: flex;
  align-items: center;
  justify-content: flex-end;
  padding-right: 20px;
}
.grip.dark { width: 10px; margin-right: 7px; color: #333; }
.hscroll {
  width: 481px;
  height: 22px;
  border-radius: 10px;
  background: #f3f7f6;
  display: flex;
  align-items: center;
  padding: 0 5px 0 4px;
  box-sizing: border-box;
  gap: 6px;
}
.h-l { border-right: 6px solid #555; border-top: 6px solid transparent; border-bottom: 6px solid transparent; }
.h-r { border-left: 6px solid #555; border-top: 6px solid transparent; border-bottom: 6px solid transparent; margin-left: 22px; }
.h-thumb { flex: 1; height: 8px; border-radius: 4px; background: #757575; }

.statusbar {
  flex: none;
  height: 22px;
  display: flex;
  align-items: center;
  background: #f7f7f7;
  font-size: 10px;
  color: #555;
  padding-left: 10px;
  box-sizing: border-box;
}
.ready { width: 48px; }
.st-macro { margin-right: 15px; }
.st-acc { margin-right: 3px; }
.st-right { margin-left: auto; display: flex; align-items: center; height: 100%; }
.view {
  width: 40px;
  height: 100%;
  display: flex;
  align-items: center;
  justify-content: center;
}
.view.on { background: #e3e3e3; }
.zm { font-size: 13px; width: 12px; text-align: center; }
.minus { margin-left: 3px; }
.slider {
  position: relative;
  width: 98px;
  height: 1px;
  background: #444;
  margin-left: 4px;
}
.tick { position: absolute; left: 49px; top: -2px; width: 1px; height: 5px; background: #444; }
.knob { position: absolute; left: 52.5px; top: -6px; width: 5px; height: 13px; background: #555; }
.plus-z { margin-left: 3px; }
.pct-l { width: 34px; margin-left: 11px; }

.taskbar {
  flex: none;
  height: 48px;
  background: linear-gradient(90deg, #1d2418, #2a2c1f 45%, #1d2a2c 70%, #0f2a30);
  display: flex;
  align-items: center;
  color: #fff;
  position: relative;
}
.start { margin-left: 20px; }
.tb-search {
  width: 220px;
  height: 32px;
  margin-left: 13px;
  border-radius: 16px;
  background: #3d4535;
  display: flex;
  align-items: center;
  gap: 11px;
  padding-left: 11px;
  box-sizing: border-box;
  font-size: 13.5px;
  color: #e6e6e6;
}
.tb-apps { display: flex; align-items: center; padding-left: 2px; }
.app-ic {
  position: relative;
  width: 44px;
  height: 48px;
  display: flex;
  align-items: center;
  justify-content: center;
  box-sizing: border-box;
}
.app-ic.current { background: #3a3f36; border-radius: 4px; height: 39px; width: 40px; margin: 0 2px; }
.dot {
  position: absolute;
  bottom: 5px;
  left: 19px;
  width: 6px;
  height: 3px;
  border-radius: 2px;
  background: #9a9a9a;
}
.app-ic:nth-child(-n + 2) .dot { display: none; }
.app-ic.current .dot { width: 16px; left: 12px; bottom: 1px; background: #d4a5e8; }
.tb-l { font-size: 9px; font-weight: 700; fill: #fff; }
.tray {
  margin-left: auto;
  display: flex;
  align-items: center;
  padding-right: 20px;
}
.t-wifi { margin-left: 18px; }
.t-vol { margin-left: 5px; }
.t-bat { margin-left: 9px; }
.clock {
  display: flex;
  flex-direction: column;
  align-items: flex-end;
  font-size: 11.6px;
  line-height: 17px;
  margin-left: 15px;
  width: 55px;
  white-space: nowrap;
}
</style>
